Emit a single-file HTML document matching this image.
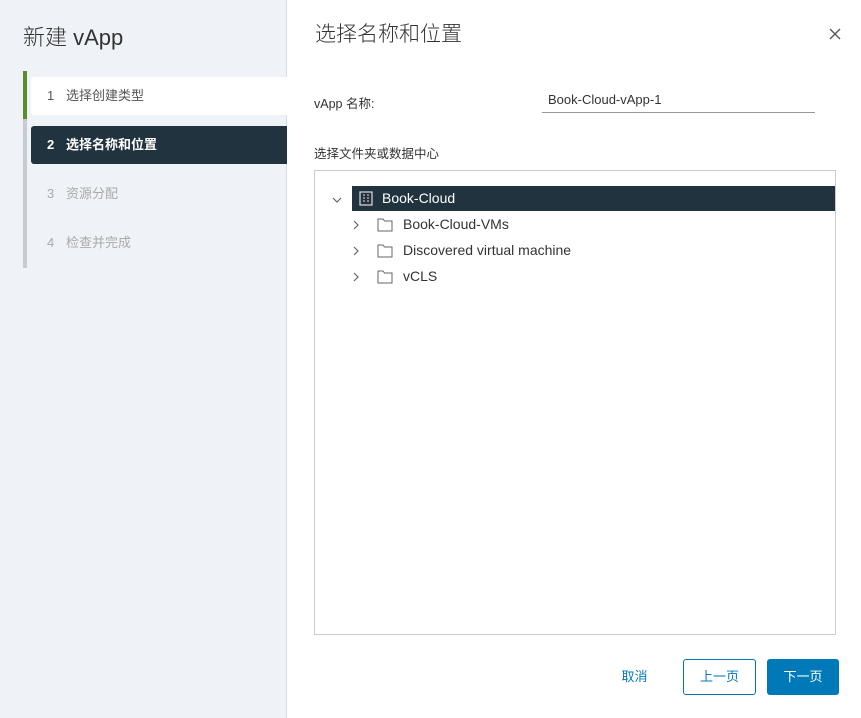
<!DOCTYPE html>
<html><head><meta charset="utf-8"><style>
*{box-sizing:border-box;margin:0;padding:0}
body{width:861px;height:718px;background:#fff;font-family:"Liberation Sans","Noto Sans CJK SC",sans-serif;position:relative;overflow:hidden;color:#333}
.side{position:absolute;left:0;top:0;width:287px;height:718px;background:#eff2f6;border-right:1px solid #d8dde3}
.title{position:absolute;left:23px;top:20px;font-size:22px;color:#333;font-weight:300}
.bar{position:absolute;left:23px;top:71px;width:4px;height:197px;background:#c8ccd0}
.bar2{position:absolute;left:23px;top:71px;width:4px;height:48px;background:#5a8e2a}
.step{position:absolute;left:31px;width:256px;height:38px;font-size:13px;line-height:38px;padding-left:16px;border-radius:3px 0 0 3px}
.step span{display:inline-block;width:19px}
.s1{top:77px;background:#fff;color:#555}
.s2{top:126px;background:#21333f;color:#fff;font-weight:bold}
.s3{top:175px;color:#aaa}
.s4{top:224px;color:#aaa}
.h{position:absolute;left:315px;top:18px;font-size:21px;color:#333;font-weight:300}
.x{position:absolute;left:828px;top:27px}
.lbl{position:absolute;font-size:12.5px;color:#333}
.inp{position:absolute;left:542px;top:88px;width:273px;height:25px;border-bottom:1px solid #999;font-size:13px;padding:4px 6px}
.tree{position:absolute;left:314px;top:170px;width:522px;height:465px;border:1px solid #ccc}
.row{position:absolute;left:0;width:520px;height:25px;font-size:14px;line-height:25px}
.sel{position:absolute;left:37px;top:15px;width:483px;height:25px;background:#21333f}
.btn{position:absolute;top:659px;height:36px;width:73px;border-radius:3px;font-size:13px;line-height:36px;text-align:center}
</style></head><body>
<div class="side">
<div class="title">新建 vApp</div>
<div class="bar"></div><div class="bar2"></div>
<div class="step s1"><span>1</span>选择创建类型</div>
<div class="step s2"><span>2</span>选择名称和位置</div>
<div class="step s3"><span>3</span>资源分配</div>
<div class="step s4"><span>4</span>检查并完成</div>
</div>
<div class="h">选择名称和位置</div>
<svg class="x" width="14" height="14" viewBox="0 0 14 14"><path d="M2 2L12 12M12 2L2 12" stroke="#555" stroke-width="1.4"/></svg>
<div class="lbl" style="left:314px;top:93px">vApp 名称:</div>
<div class="inp">Book-Cloud-vApp-1</div>
<div class="lbl" style="left:314px;top:143px">选择文件夹或数据中心</div>
<div class="tree">
<div class="sel"></div>
<svg style="position:absolute;left:17px;top:25px" width="10" height="8"><path d="M1 2L5 6L9 2" fill="none" stroke="#666" stroke-width="1.2"/></svg>
<svg style="position:absolute;left:44px;top:20px" width="14" height="15" viewBox="0 0 14 15"><rect x="1" y="1" width="12" height="13" fill="none" stroke="#ddd" stroke-width="1.2"/><path d="M4 4h2M8 4h2M4 7h2M8 7h2M4 10h2M8 10h2" stroke="#ddd"/></svg>
<div class="row" style="top:15px;left:67px;color:#fff">Book-Cloud</div>
<div class="row" style="top:41px;left:88px">Book-Cloud-VMs</div>
<div class="row" style="top:67px;left:88px">Discovered virtual machine</div>
<div class="row" style="top:93px;left:88px">vCLS</div>
<svg style="position:absolute;left:37px;top:49px" width="8" height="90"><path d="M2 1L6 5L2 9M2 27L6 31L2 35M2 53L6 57L2 61" fill="none" stroke="#666" stroke-width="1.2"/></svg>
<svg style="position:absolute;left:62px;top:46px" width="16" height="70"><path d="M1 2h5l1.5 2H15v10H1z" fill="none" stroke="#666"/><path d="M1 28h5l1.5 2H15v10H1z" fill="none" stroke="#666"/><path d="M1 54h5l1.5 2H15v10H1z" fill="none" stroke="#666"/></svg>
</div>
<div class="btn" style="left:598px;color:#0079b8;border:none">取消</div>
<div class="btn" style="left:683px;border:1px solid #0079b8;color:#0079b8;line-height:34px">上一页</div>
<div class="btn" style="left:767px;background:#0079b8;color:#fff;width:72px">下一页</div>
</body></html>
